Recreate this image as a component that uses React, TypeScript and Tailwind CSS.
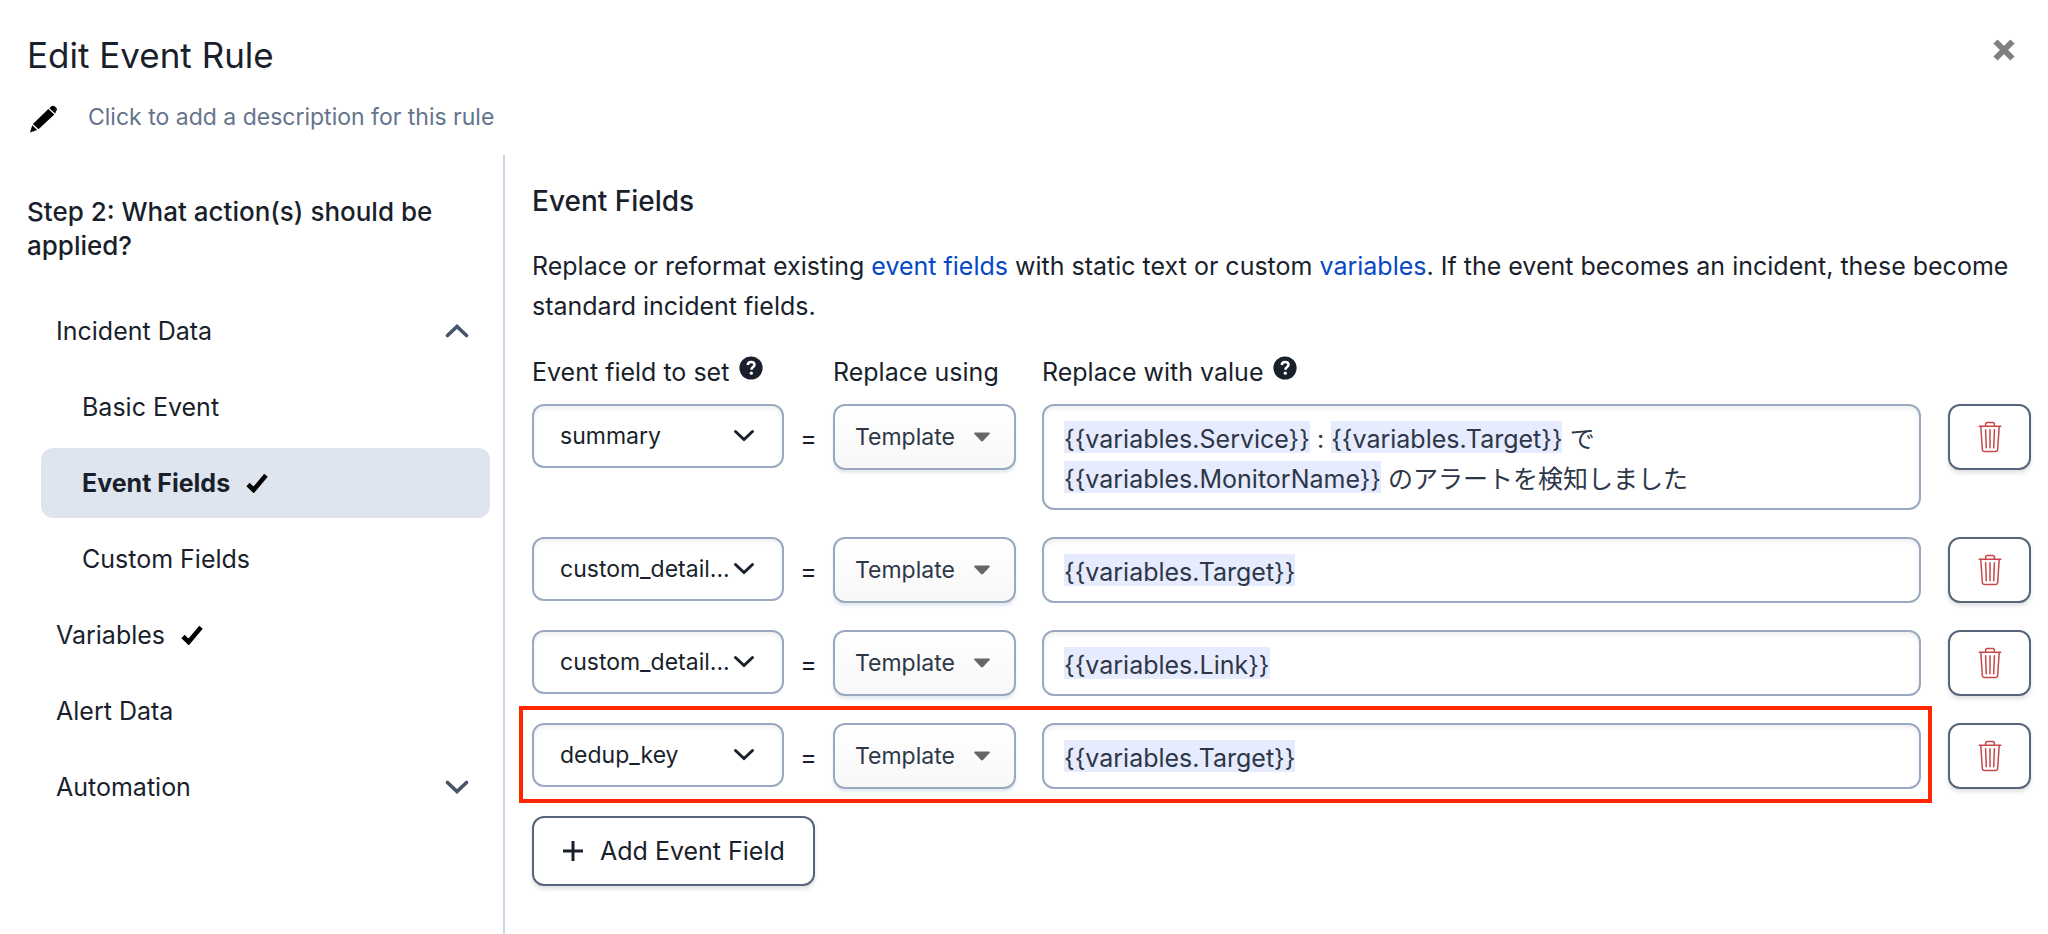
import React, { useMemo, useState } from 'react';

type EventField = {
  id: number;
  field: string;
  value: string;
  highlighted?: boolean;
};

const initialFields: EventField[] = [
  {
    id: 1,
    field: 'summary',
    value: '{{variables.Service}} : {{variables.Target}} で\n{{variables.MonitorName}} のアラートを検知しました',
  },
  { id: 2, field: 'custom_detail...', value: '{{variables.Target}}' },
  { id: 3, field: 'custom_detail...', value: '{{variables.Link}}' },
  { id: 4, field: 'dedup_key', value: '{{variables.Target}}', highlighted: true },
];

function PencilIcon() {
  return (
    <svg width="31" height="28" viewBox="-3 0 31 28" aria-hidden="true">
      <path d="M0 27.5L2.2 20.3L7.2 25z" fill="#000" />
      <path d="M2.9 18.9L18.3 4.1L24.3 9.5L8.5 24.3z" fill="#000" />
      <path d="M19.3 3.2L21.3 1.3c1-.9 2.3-.9 3.3 0l1.6 1.5c1 1 1 2.3 0 3.3L25.2 8.6z" fill="#000" />
    </svg>
  );
}

function CheckIcon() {
  return (
    <svg width="22" height="20" viewBox="0 0 22 20" aria-hidden="true">
      <path d="M2 11.5l5.6 5.5L20 2.2" fill="none" stroke="#000" strokeWidth="4.6" />
    </svg>
  );
}

function Chevron({ up = false }: { up?: boolean }) {
  return (
    <svg width="24" height="14" viewBox="0 0 24 14" fill="none" stroke="#475569" strokeWidth="3.6" strokeLinecap="round" aria-hidden="true">
      <path d={up ? 'M2.5 11.5L12 2.5L21.5 11.5' : 'M2.5 2.5L12 11.5L21.5 2.5'} />
    </svg>
  );
}

function HelpIcon() {
  return (
    <svg width="24" height="24" viewBox="0 0 24 24" className="mb-2" aria-hidden="true">
      <circle cx="12" cy="12" r="11.6" fill="#1a1f2c" />
      <path d="M8.7 9c.2-1.9 1.5-2.9 3.4-2.9 2 0 3.4 1 3.4 2.7 0 2.3-3.1 2.3-3.1 5" fill="none" stroke="#fff" strokeWidth="2.5" />
      <circle cx="12.3" cy="17.2" r="1.6" fill="#fff" />
    </svg>
  );
}

function TrashIcon() {
  return (
    <svg width="24" height="32" viewBox="0 0 24 32" fill="none" stroke="#c9474a" strokeWidth="1.5" strokeLinecap="round" aria-hidden="true">
      <path d="M1.2 5.2h21.6M7.6 5V3.2c0-1.1.7-1.8 1.8-1.8h5.2c1.1 0 1.8.7 1.8 1.8V5" />
      <path d="M2.8 5.4l1.5 22.8c.1 1.4.9 2.2 2.3 2.2h10.8c1.4 0 2.2-.8 2.3-2.2l1.5-22.8" />
      <path d="M7.6 8.8l.7 18M12 8.8v18M16.4 8.8l-.7 18" />
    </svg>
  );
}

function NavItem({ label, nested, active, checked, chevron }: {
  label: string;
  nested?: boolean;
  active?: boolean;
  checked?: boolean;
  chevron?: 'up' | 'down';
}) {
  return (
    <li>
      <button
        type="button"
        className={`w-full h-[70px] flex items-center rounded-xl pr-[21px] text-left ${nested ? 'pl-[41px]' : 'pl-[15px]'} ${
          active ? 'bg-[#dee5ee] font-bold' : ''
        }`}
      >
        <span className="mr-4">{label}</span>
        {checked && <CheckIcon />}
        {chevron && (
          <span className="ml-auto">
            <Chevron up={chevron === 'up'} />
          </span>
        )}
      </button>
    </li>
  );
}

const FONT = "25px Inter, 'Noto Sans CJK JP', sans-serif";
const PAD_X = 20;
const PAD_TOP = 13;
const LINE = 40;

// Paints a box behind every {{variable}} token, since a textarea cannot style part of its text
function tokenBackground(value: string): React.CSSProperties {
  const ctx = document.createElement('canvas').getContext('2d');
  if (!ctx) return {};
  ctx.font = FONT;
  const positions: string[] = [];
  const sizes: string[] = [];
  value.split('\n').forEach((line, row) => {
    for (const match of line.matchAll(/\{\{[^}]*\}\}/g)) {
      const x = PAD_X + ctx.measureText(line.slice(0, match.index)).width;
      positions.push(`${Math.round(x)}px ${PAD_TOP + row * LINE + 2}px`);
      sizes.push(`${Math.round(ctx.measureText(match[0]).width)}px 32px`);
    }
  });
  return {
    backgroundImage: positions.map(() => 'linear-gradient(#e6ebfd, #e6ebfd)').join(', '),
    backgroundPosition: positions.join(', '),
    backgroundSize: sizes.join(', '),
  };
}

function TemplateInput({ id, value, onChange }: { id: number; value: string; onChange: (v: string) => void }) {
  const tokens = useMemo(() => tokenBackground(value), [value]);
  return (
    <div className="flex-1 ml-[26px] border-2 border-[#9aa9bf] rounded-xl bg-white shadow-[inset_0_3px_4px_rgba(0,0,0,0.06)]">
      <textarea
        rows={value.split('\n').length}
        aria-label={`Replace with value ${id}`}
        value={value}
        onChange={(e) => onChange(e.target.value)}
        style={tokens}
        className="block w-full px-5 pt-[13px] pb-[9px] leading-10 resize-none overflow-hidden bg-no-repeat text-[#2d3748] outline-none"
      />
    </div>
  );
}

function FieldRow({ item, onChange, onDelete }: {
  item: EventField;
  onChange: (v: string) => void;
  onDelete: () => void;
}) {
  return (
    <div className="relative flex items-start">
      {item.highlighted && (
        <div className="absolute -left-[13px] -top-[17px] -bottom-[14px] right-[99px] border-4 border-[#ff2600] pointer-events-none" />
      )}
      <div className="relative w-[252px] shrink-0">
        <select
          aria-label={`Event field to set ${item.id}`}
          defaultValue={item.field}
          className="block appearance-none w-full h-16 pl-[26px] pr-12 text-[23px] border-2 border-[#9aa9bf] rounded-xl bg-white shadow-[inset_0_3px_4px_rgba(0,0,0,0.06)]"
        >
          <option>{item.field}</option>
        </select>
        <svg className="absolute right-7 top-6 pointer-events-none" width="24" height="14" viewBox="0 0 24 14" fill="none" stroke="#1a1f2c" strokeWidth="3" strokeLinecap="round" aria-hidden="true">
          <path d="M3.5 3.5L12 11.5L20.5 3.5" />
        </svg>
      </div>
      <span className="w-[49px] shrink-0 h-[66px] pt-[2px] flex items-center justify-center">=</span>
      <button
        type="button"
        className="w-[183px] shrink-0 h-[66px] pl-5 pr-6 flex items-center justify-between text-[23px] text-[#2d3748] border-2 border-[#9aa9bf] rounded-xl bg-linear-to-b from-white to-[#f8f8f8] shadow-[0_3px_3px_rgba(148,170,200,0.25)]"
      >
        Template
        <svg width="16" height="10" viewBox="0 0 16 10" aria-hidden="true">
          <path d="M1 .5h14c.8 0 1.1.8.6 1.4L9 9c-.6.6-1.4.6-2 0L.4 1.9C-.1 1.3.2.5 1 .5z" fill="#666" />
        </svg>
      </button>
      <TemplateInput id={item.id} value={item.value} onChange={onChange} />
      <button
        type="button"
        aria-label={`Delete event field ${item.id}`}
        onClick={onDelete}
        className="ml-[27px] w-[83px] shrink-0 h-[66px] flex items-center justify-center border-2 border-[#566579] rounded-xl bg-white shadow-[0_3px_4px_rgba(0,0,0,0.12)]"
      >
        <TrashIcon />
      </button>
    </div>
  );
}

export default function App() {
  const [fields, setFields] = useState(initialFields);

  const setValue = (id: number, value: string) =>
    setFields(fields.map((f) => (f.id === id ? { ...f, value } : f)));

  const addField = () =>
    setFields([...fields, { id: Math.max(0, ...fields.map((f) => f.id)) + 1, field: 'summary', value: '' }]);

  return (
    <div className="min-h-screen flex flex-col bg-white text-[#1a1f2c] text-[25px] leading-10 font-[Inter,'Noto_Sans_CJK_JP',sans-serif]">
      <header className="h-[155px] pt-[31px] pl-[27px] pr-8 flex items-start justify-between">
        <div>
          <h1 className="text-[35px] leading-[48px]">Edit Event Rule</h1>
          <button type="button" className="mt-[18px] flex items-start gap-[30px] text-[23px] text-[#64748b]">
            <span className="pt-2">
              <PencilIcon />
            </span>
            Click to add a description for this rule
          </button>
        </div>
        <button type="button" aria-label="Close" className="mt-[7px]">
          <svg width="24" height="24" viewBox="0 0 24 24" stroke="#808080" strokeWidth="6" aria-hidden="true">
            <path d="M3.5 3.5L20.5 20.5M20.5 3.5L3.5 20.5" />
          </svg>
        </button>
      </header>

      <div className="flex-1 flex">
        <aside className="w-[505px] shrink-0 border-r-2 border-[#cbd5e3] pt-10">
          <h2 className="pl-[27px] pr-12 text-[26px] font-medium leading-[34px]">Step 2: What action(s) should be applied?</h2>
          <nav className="mt-[33px] ml-[41px] mr-[13px]">
            <ul className="flex flex-col gap-[6px]">
              <NavItem label="Incident Data" chevron="up" />
              <NavItem label="Basic Event" nested />
              <NavItem label="Event Fields" nested active checked />
              <NavItem label="Custom Fields" nested />
              <NavItem label="Variables" checked />
              <NavItem label="Alert Data" />
              <NavItem label="Automation" chevron="down" />
            </ul>
          </nav>
        </aside>

        <main className="flex-1 min-w-0 pt-[26px] pl-[27px] pr-[17px]">
          <h2 className="text-[28px] font-medium">Event Fields</h2>
          <p className="mt-[25px]">
            Replace or reformat existing <a href="#event-fields" className="text-[#0548c8]">event fields</a> with static
            text or custom <a href="#variables" className="text-[#0548c8]">variables</a>. If the event becomes an
            incident, these become standard incident fields.
          </p>

          <div className="mt-[26px] flex">
            <div className="w-[301px] flex items-center gap-[10px]">Event field to set <HelpIcon /></div>
            <div className="w-[209px]">Replace using</div>
            <div className="flex items-center gap-[10px]">Replace with value <HelpIcon /></div>
          </div>

          <div className="mt-3 flex flex-col gap-[27px]">
            {fields.map((item) => (
              <FieldRow
                key={item.id}
                item={item}
                onChange={(v) => setValue(item.id, v)}
                onDelete={() => setFields(fields.filter((f) => f.id !== item.id))}
              />
            ))}
          </div>

          <button
            type="button"
            onClick={addField}
            className="mt-[27px] h-[70px] px-7 flex items-center gap-4 border-2 border-[#566579] rounded-xl bg-white shadow-[0_3px_4px_rgba(0,0,0,0.12)]"
          >
            <svg width="22" height="22" viewBox="0 0 22 22" stroke="#1a1f2c" strokeWidth="3" aria-hidden="true">
              <path d="M11 1v20M1 11h20" />
            </svg>
            Add Event Field
          </button>
        </main>
      </div>
    </div>
  );
}
